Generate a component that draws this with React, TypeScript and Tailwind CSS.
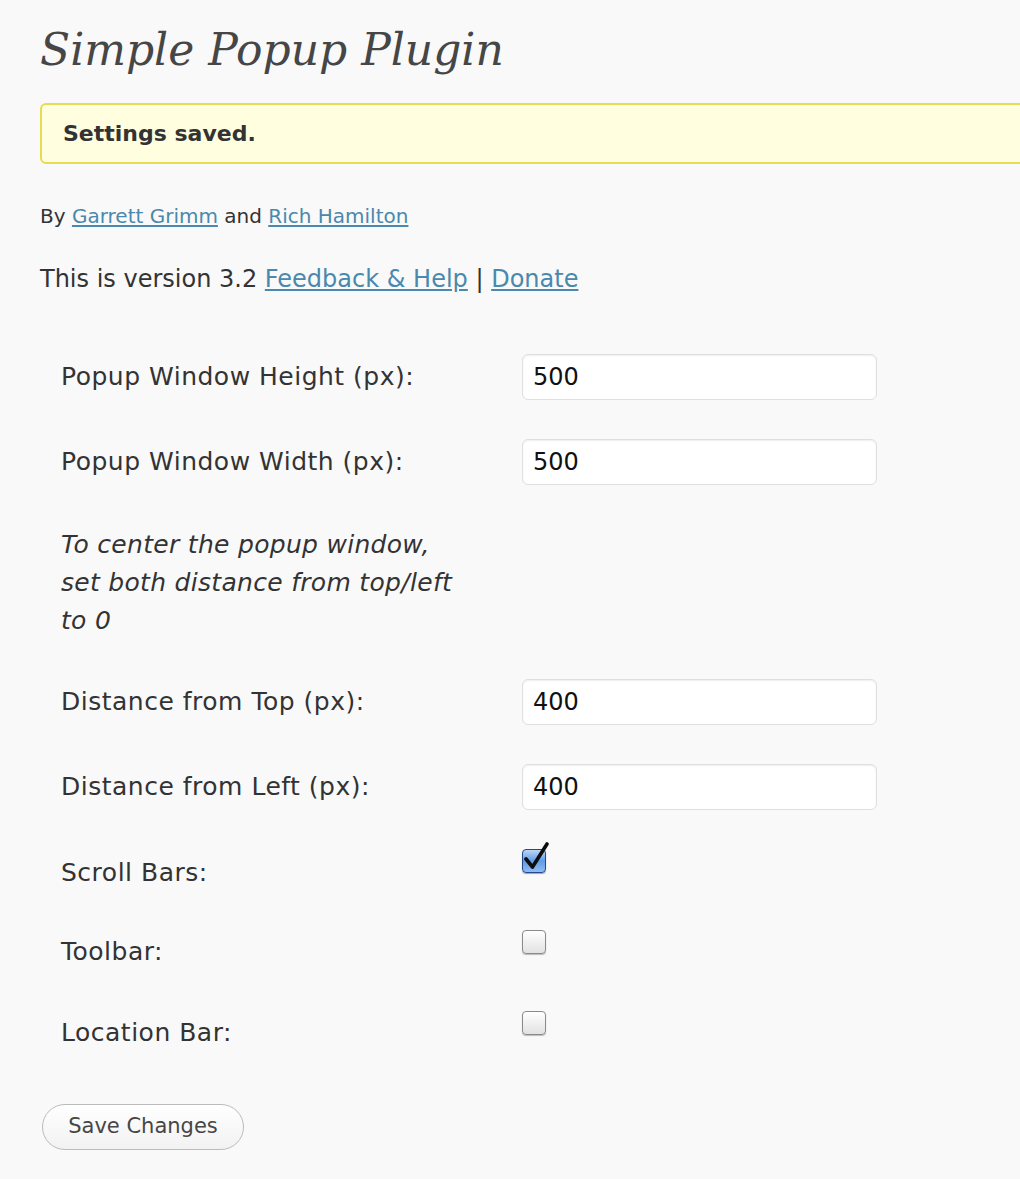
import React from "react";

const sans = { fontFamily: '"DejaVu Sans", "Lucida Grande", Verdana, sans-serif' };

function TextRow({ label, value }: { label: string; value: string }) {
  return (
    <div className="grid grid-cols-[461px_355px] items-center h-[85px]">
      <div className="text-[25px] tracking-[0.5px] text-[#333]">{label}</div>
      <input
        readOnly
        value={value}
        className="h-[46px] w-[355px] rounded-[6px] border border-[#dfdfdf] bg-white px-[10px] text-[24px] text-[#111] shadow-[inset_0_1px_2px_rgba(0,0,0,0.07)] outline-none"
        style={sans}
      />
    </div>
  );
}

function Check({ checked }: { checked?: boolean }) {
  if (checked) {
    return (
      <div className="relative h-[24px] w-[24px]">
        <div className="absolute inset-0 rounded-[4px] border border-[#24488f] bg-gradient-to-b from-[#bcd6f7] via-[#5f9be6] to-[#8fbdf3] shadow-[0_1px_1px_rgba(0,0,0,0.35)]" />
        <svg className="absolute -top-[7px] left-[1px]" width="26" height="30" viewBox="0 0 26 30">
          <path d="M3 17 L9.5 25 L24 2" fill="none" stroke="#0d0d0d" strokeWidth="3.6" strokeLinecap="round" strokeLinejoin="round" />
        </svg>
      </div>
    );
  }
  return (
    <div className="h-[24px] w-[24px] rounded-[4px] border border-[#8a8a8a] bg-gradient-to-b from-[#ffffff] to-[#e2e2e2] shadow-[0_1px_1px_rgba(0,0,0,0.25)]" />
  );
}

function CheckRow({ label, checked, labelPt }: { label: string; checked?: boolean; labelPt: string }) {
  return (
    <div className="grid grid-cols-[461px_355px] items-start h-[81px]">
      <div className={`${labelPt} text-[25px] tracking-[0.5px] text-[#333]`}>{label}</div>
      <div className="pt-[20px]">
        <Check checked={checked} />
      </div>
    </div>
  );
}

export default function App() {
  return (
    <div className="min-h-[1179px] w-[1020px] overflow-hidden bg-[#f9f9f9] text-[#333]" style={sans}>
      <div className="pl-[40px] pt-[22px]">
        <h1
          className="text-[44px] italic leading-[56px] text-[#464646]"
          style={{ fontFamily: '"DejaVu Serif", Georgia, "Liberation Serif", serif' }}
        >
          Simple Popup Plugin
        </h1>

        <div className="mt-[25px] flex h-[61px] w-[1000px] items-center rounded-[6px] border-2 border-[#e6db55] bg-[#ffffe0] pl-[21px]">
          <p className="text-[22px] font-bold text-[#333]">Settings saved.</p>
        </div>

        <p className="mt-[37px] text-[20px] text-[#333]">
          By{" "}
          <a className="text-[#4a88ad] underline underline-offset-2">Garrett Grimm</a> and{" "}
          <a className="text-[#4a88ad] underline underline-offset-2">Rich Hamilton</a>
        </p>

        <p className="mt-[30px] text-[24px] text-[#333]">
          This is version 3.2{" "}
          <a className="text-[#4a88ad] underline underline-offset-2">Feedback &amp; Help</a> |{" "}
          <a className="text-[#4a88ad] underline underline-offset-2">Donate</a>
        </p>
      </div>

      <div className="mt-[37px] pl-[61px]">
        <TextRow label="Popup Window Height (px):" value="500" />
        <TextRow label="Popup Window Width (px):" value="500" />
        <div className="h-[155px] pt-[22px]">
          <p className="w-[440px] text-[25px] italic leading-[38px] tracking-[0.3px] text-[#333]">
            To center the popup window,
            <br />
            set both distance from top/left
            <br />
            to 0
          </p>
        </div>
        <TextRow label="Distance from Top (px):" value="400" />
        <TextRow label="Distance from Left (px):" value="400" />
        <CheckRow label="Scroll Bars:" checked labelPt="pt-[25px]" />
        <CheckRow label="Toolbar:" labelPt="pt-[23px]" />
        <CheckRow label="Location Bar:" labelPt="pt-[23px]" />
      </div>

      <div className="mt-[32px] pl-[42px]">
        <button className="h-[46px] w-[202px] rounded-full border border-[#bbb] bg-gradient-to-b from-white to-[#f2f2f2] text-[21px] text-[#464646]">
          Save Changes
        </button>
      </div>
    </div>
  );
}
